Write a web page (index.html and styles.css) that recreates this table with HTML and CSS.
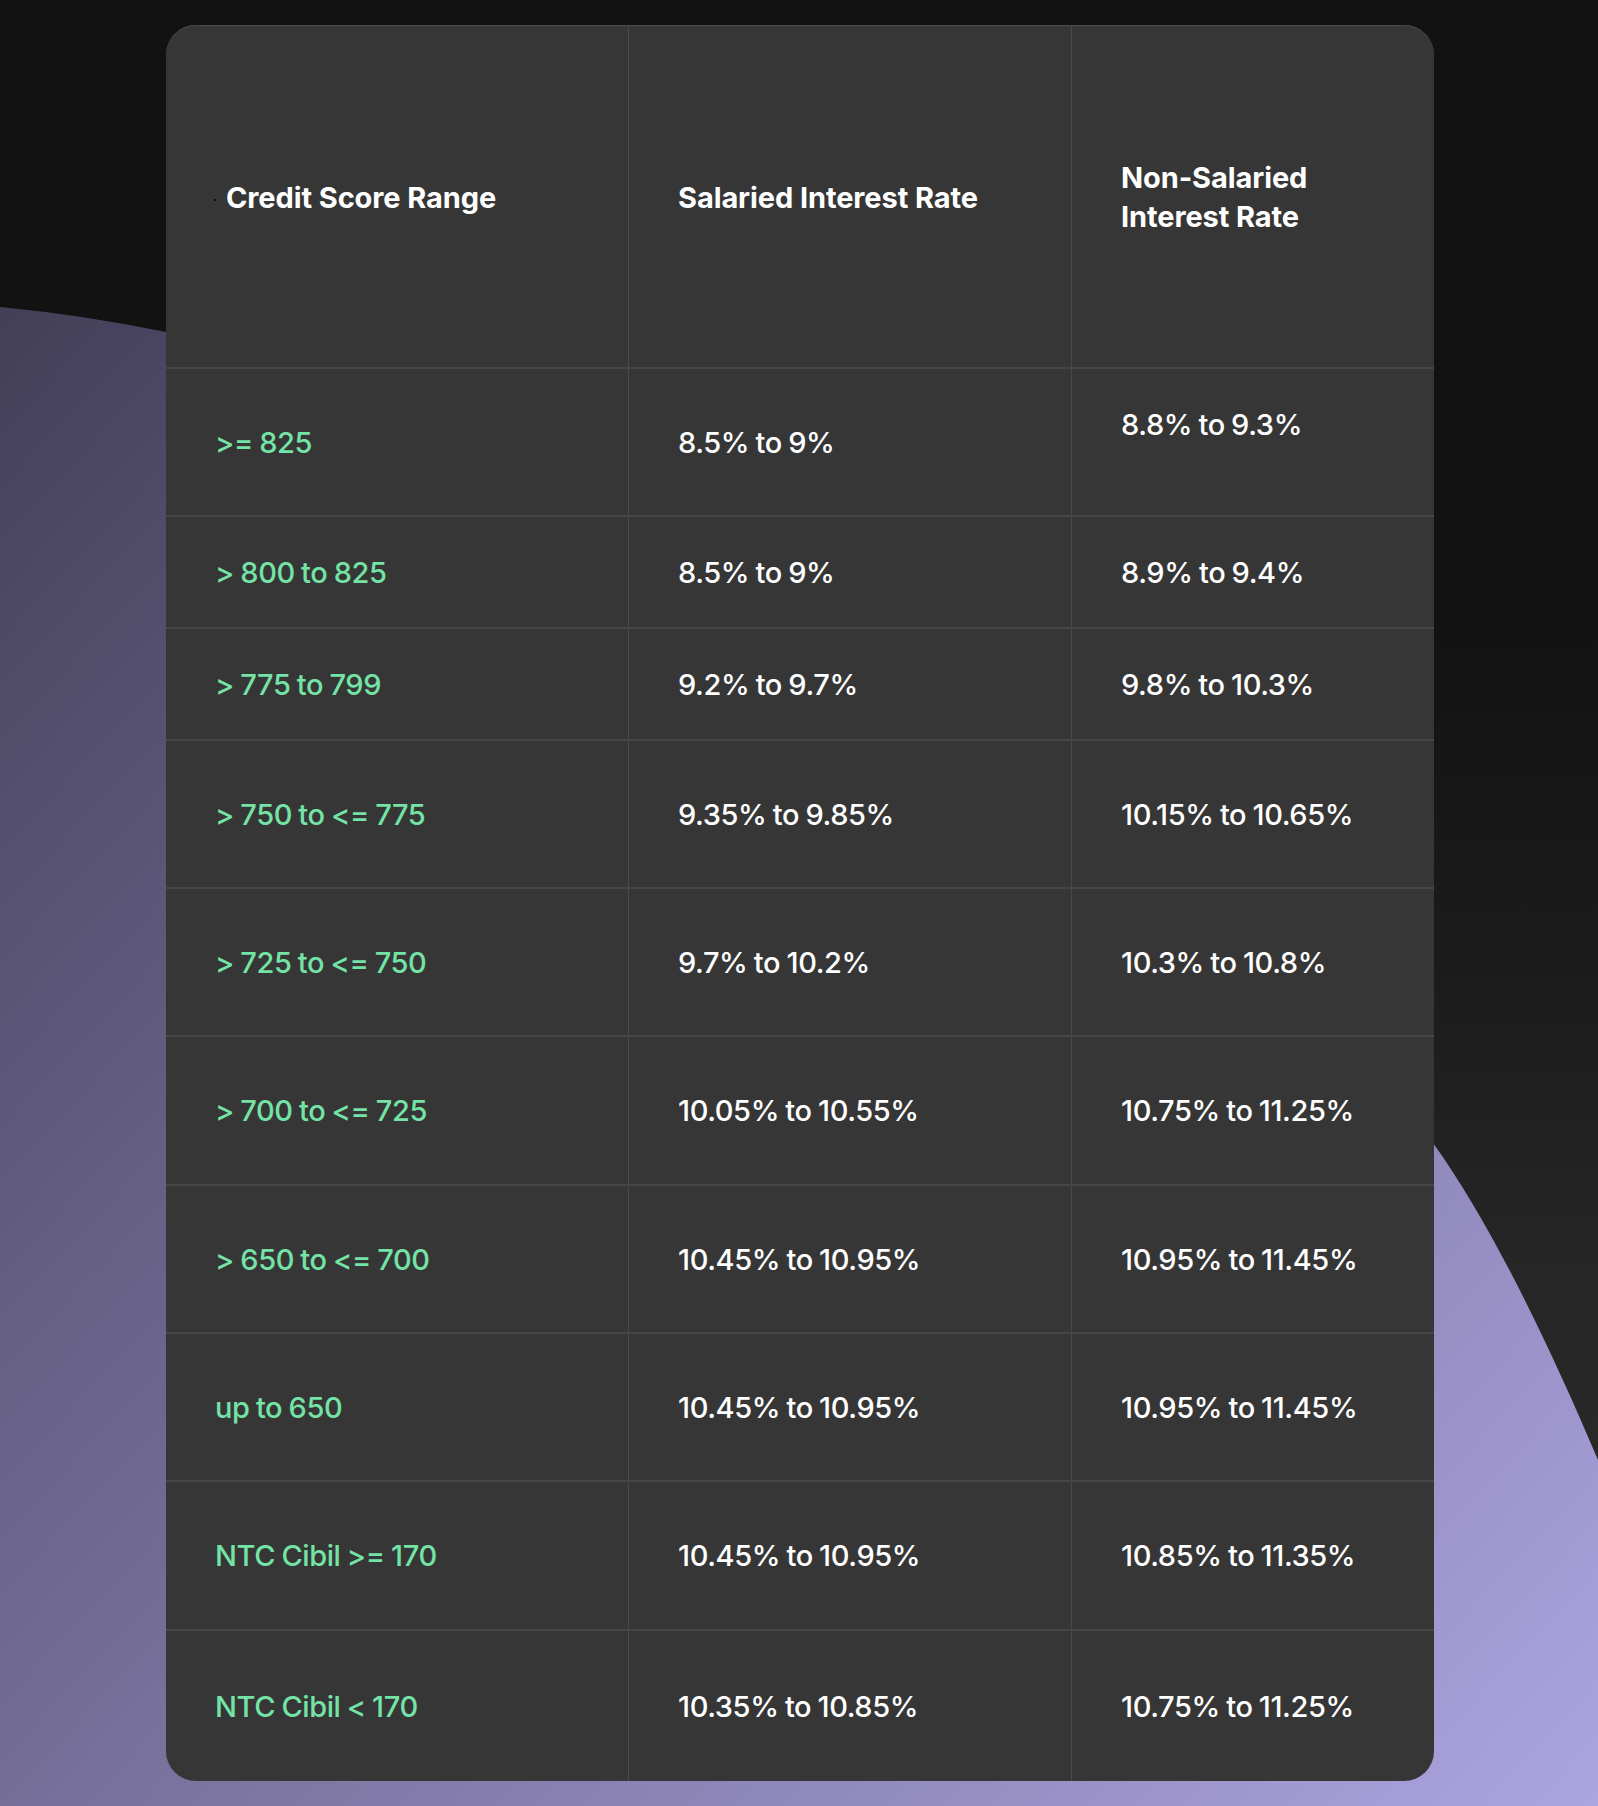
FILE: index.html
```html
<!DOCTYPE html>
<html lang="en">
<head>
<meta charset="utf-8">
<title>Credit Score Interest Rates</title>
<link rel="stylesheet" href="styles.css">
</head>
<body>
<div class="page">
  <svg class="backdrop" viewBox="0 0 1598 1806" width="1598" height="1806" aria-hidden="true">
    <defs>
      <linearGradient id="blob" gradientUnits="userSpaceOnUse" x1="0" y1="307" x2="1598" y2="1806">
        <stop offset="0" stop-color="#433f58"/>
        <stop offset="1" stop-color="#aca4e0"/>
      </linearGradient>
    </defs>
    <path d="M0,307 Q83,315 166,332 C600,420 1250,850 1433,1143 C1490,1222 1548,1342 1598,1460 L1598,1806 L0,1806 Z" fill="url(#blob)"/>
  </svg>

  <div class="card">
    <table class="rates">
      <thead>
        <tr class="head-row">
          <th><span class="dot"></span>Credit Score Range</th>
          <th>Salaried Interest Rate</th>
          <th>Non-Salaried<br>Interest Rate</th>
        </tr>
      </thead>
      <tbody>
        <tr class="tall">
          <td class="range">&gt;= 825</td>
          <td>8.5% to 9%</td>
          <td><span class="raised">8.8% to 9.3%</span></td>
        </tr>
        <tr class="short">
          <td class="range">&gt; 800 to 825</td>
          <td>8.5% to 9%</td>
          <td>8.9% to 9.4%</td>
        </tr>
        <tr class="short">
          <td class="range">&gt; 775 to 799</td>
          <td>9.2% to 9.7%</td>
          <td>9.8% to 10.3%</td>
        </tr>
        <tr class="tall">
          <td class="range">&gt; 750 to &lt;= 775</td>
          <td>9.35% to 9.85%</td>
          <td>10.15% to 10.65%</td>
        </tr>
        <tr class="tall">
          <td class="range">&gt; 725 to &lt;= 750</td>
          <td>9.7% to 10.2%</td>
          <td>10.3% to 10.8%</td>
        </tr>
        <tr class="tall t149">
          <td class="range">&gt; 700 to &lt;= 725</td>
          <td>10.05% to 10.55%</td>
          <td>10.75% to 11.25%</td>
        </tr>
        <tr class="tall">
          <td class="range">&gt; 650 to &lt;= 700</td>
          <td>10.45% to 10.95%</td>
          <td>10.95% to 11.45%</td>
        </tr>
        <tr class="tall">
          <td class="range">up to 650</td>
          <td>10.45% to 10.95%</td>
          <td>10.95% to 11.45%</td>
        </tr>
        <tr class="tall t149">
          <td class="range">NTC Cibil &gt;= 170</td>
          <td>10.45% to 10.95%</td>
          <td>10.85% to 11.35%</td>
        </tr>
        <tr class="last">
          <td class="range">NTC Cibil &lt; 170</td>
          <td>10.35% to 10.85%</td>
          <td>10.75% to 11.25%</td>
        </tr>
      </tbody>
    </table>
  </div>
</div>
</body>
</html>
```

FILE: styles.css
```css
* { box-sizing: border-box; }

html, body {
  margin: 0;
  padding: 0;
}

body {
  background: #111111;
  font-family: Inter, "Liberation Sans", sans-serif;
  color: #ffffff;
}

.page {
  position: relative;
  width: 1598px;
  height: 1806px;
  overflow: hidden;
  padding-top: 25px;
  background: linear-gradient(180deg, #121212 0%, #121212 34%, #1c1c1c 55%, #262626 70%, #2c2c2c 100%);
}

.backdrop {
  position: absolute;
  left: 0;
  top: 0;
  display: block;
}

.card {
  position: relative;
  width: 1268px;
  margin: 0 auto 0 166px;
  background: #363636;
  border-radius: 30px;
  overflow: hidden;
  box-shadow: inset 0 1px 0 #4a4a4a;
}

.rates {
  width: 100%;
  border-collapse: separate;
  border-spacing: 0;
  table-layout: fixed;
}

.rates th,
.rates td {
  padding: 1px 20px 0 49px;
  text-align: left;
  vertical-align: middle;
  border-right: 1px solid #4a4a4a;
  border-bottom: 2px solid #464646;
  font-size: 29px;
}

.rates th:nth-child(1), .rates td:nth-child(1) { width: 463px; }
.rates th:nth-child(2), .rates td:nth-child(2) { width: 443px; }
.rates th:nth-child(3), .rates td:nth-child(3) { width: 362px; border-right: none; }

.head-row th {
  height: 344px;
  font-weight: 700;
  line-height: 39px;
  letter-spacing: -0.1px;
  padding-top: 2px;
}

.dot {
  display: inline-block;
  width: 2px;
  height: 2px;
  background: #0c0c0c;
  vertical-align: middle;
  margin-right: 10px;
  margin-left: -1px;
}

.rates td {
  font-weight: 500;
  line-height: 36px;
  letter-spacing: -0.4px;
  word-spacing: -1px;
}

.tall td { height: 148px; }
.tall.t149 td { height: 149px; }
.short td { height: 112px; }
.last td { height: 150px; border-bottom: none; }

.range { color: #74e3a6; }

.raised {
  display: inline-block;
  margin-bottom: 36px;
}
```
